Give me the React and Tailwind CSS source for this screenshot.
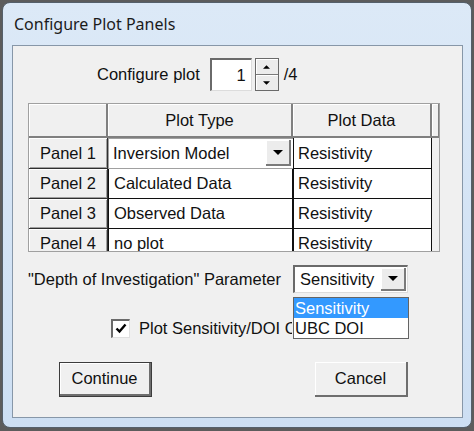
import React from "react";

const sans = { fontFamily: '"Liberation Sans", Arial, sans-serif' };

// small triangle glyph for spinners / combo buttons
const Tri = ({ up = false, size = 9 }) => (
  <svg width={size} height={Math.ceil(size / 2)} viewBox="0 0 10 5">
    <path d={up ? "M0 5 L5 0 L10 5 Z" : "M0 0 L10 0 L5 5 Z"} fill="#000" />
  </svg>
);

const ComboButton = () => (
  <div className="w-[25px] h-full bg-[#ececec] border-r-2 border-b-2 border-[#7a7a7a] shadow-[inset_1px_1px_0_#ffffff] flex items-center justify-center">
    <Tri size={10} />
  </div>
);

const rows = [
  { panel: "Panel 1", type: "Inversion Model", data: "Resistivity", combo: true },
  { panel: "Panel 2", type: "Calculated Data", data: "Resistivity" },
  { panel: "Panel 3", type: "Observed Data", data: "Resistivity" },
  { panel: "Panel 4", type: "no plot", data: "Resistivity" },
];

const PlotGrid = () => (
  <div className="ml-[15px] mt-[12px] w-[412px] h-[149px] border border-[#a0a0a0] bg-[#f0f0f0] overflow-hidden">
    <div className="grid grid-cols-[79px_185px_139px_8px] grid-rows-[34px_31px_30px_30px_30px]">
      <div className="bg-[#f0f0f0] border-r-2 border-b-2 border-[#808080] shadow-[inset_1px_1px_0_#ffffff]" />
      <div className="bg-[#f0f0f0] border-r-2 border-b-2 border-[#808080] shadow-[inset_1px_1px_0_#ffffff] flex items-center justify-center">
        Plot Type
      </div>
      <div className="bg-[#f0f0f0] border-r-2 border-b-2 border-[#808080] shadow-[inset_1px_1px_0_#ffffff] flex items-center justify-center">
        Plot Data
      </div>
      <div className="bg-[#f0f0f0] border-r-2 border-b-2 border-[#808080] shadow-[inset_1px_1px_0_#ffffff]" />

      {rows.map((r) => (
        <React.Fragment key={r.panel}>
          <div className="bg-[#f0f0f0] border-r border-b border-[#303030] shadow-[inset_1px_1px_0_#ffffff,inset_-1px_-1px_0_#a0a0a0] flex items-center justify-center">
            {r.panel}
          </div>
          {r.combo ? (
            <div className="bg-white border-b border-[#a0a0a0] flex items-stretch pl-[5px] py-[2px] pr-[2px] shadow-[inset_1px_1px_0_#a0a0a0]">
              <span className="flex-1 flex items-center">{r.type}</span>
              <ComboButton />
            </div>
          ) : (
            <div className="bg-white border-l border-r border-b border-[#101010] flex items-center pl-[5px]">
              {r.type}
            </div>
          )}
          <div className="bg-white border-l border-r border-b border-[#101010] flex items-center pl-[4px]">
            {r.data}
          </div>
          <div className="bg-[#f0f0f0]" />
        </React.Fragment>
      ))}
    </div>
  </div>
);

const DialogButton = ({ label, isDefault }) => (
  <div
    className={`w-[93px] h-[35px] flex ${
      isDefault ? "border border-[#3c3c3c]" : ""
    }`}
  >
    <div className="flex-1 bg-[#f0f0f0] border-r-2 border-b-2 border-[#6e6e6e] shadow-[inset_1px_1px_0_#ffffff] flex items-center justify-center">
      {label}
    </div>
  </div>
);

export default function App() {
  return (
    <div className="w-[474px] h-[431px] bg-[#5c5c5c] p-[2px] pb-[3px] text-[16.5px] text-[#111]" style={sans}>
      <div className="w-full h-full rounded-[8px] border border-[#55606b] bg-gradient-to-b from-[#dce9f7] to-[#cddff3] flex flex-col px-[8px] pl-[9px] pb-[9px]">
        {/* title bar */}
        <div className="h-[42px] flex items-center pl-[2px]">
          <span className="text-[16px] text-[#1b1b1b]" style={{ fontFamily: '"Noto Sans", "Open Sans", sans-serif' }}>
            Configure Plot Panels
          </span>
        </div>

        {/* client area */}
        <div className="flex-1 relative bg-[#f0f0f0] border border-[#8797a8] flex flex-col">
          <div className="mt-[12px] pl-[84px] flex items-center h-[33px]">
            <span>Configure plot</span>
            <div className="ml-[10px] w-[42px] h-[33px] bg-white border-t-2 border-l-2 border-[#6a6a6a] border-r border-b border-r-[#dcdcdc] border-b-[#dcdcdc] flex items-center justify-end pr-[5px]">
              1
            </div>
            <div className="ml-[3px] w-[24px] h-[33px] flex flex-col border border-[#6a6a6a]">
              <div className="flex-1 bg-[#ececec] border-b border-[#7a7a7a] shadow-[inset_1px_1px_0_#ffffff] flex items-center justify-center">
                <Tri up size={7} />
              </div>
              <div className="flex-1 bg-[#ececec] shadow-[inset_1px_1px_0_#ffffff] flex items-center justify-center">
                <Tri size={7} />
              </div>
            </div>
            <span className="ml-[5px]">/4</span>
          </div>

          <PlotGrid />

          <div className="mt-[13px] ml-[15px] flex items-center h-[28px]">
            <span className="w-[265px] whitespace-nowrap">"Depth of Investigation" Parameter</span>
            <div className="w-[115px] h-[28px] bg-white border-t-2 border-l-2 border-[#6a6a6a] border-r border-b border-r-[#dcdcdc] border-b-[#dcdcdc] flex items-stretch pl-[5px] py-[1px] pr-[1px]">
              <span className="flex-1 flex items-center">Sensitivity</span>
              <ComboButton />
            </div>
          </div>

          <div className="mt-[25px] pl-[98px] flex items-center h-[20px]">
            <div className="w-[19px] h-[19px] bg-white border-t-2 border-l-2 border-[#6a6a6a] border-r border-b border-r-[#e0e0e0] border-b-[#e0e0e0] flex items-center justify-center">
              <svg width="12" height="11" viewBox="0 0 12 11">
                <path d="M1.5 5.5 L4.5 8.5 L10.5 1.5" stroke="#000" strokeWidth="2.4" fill="none" />
              </svg>
            </div>
            {/* the open list covers the rest of this label */}
            <span className="ml-[9px] w-[153px] overflow-hidden whitespace-nowrap">Plot Sensitivity/DOI Cutoff</span>
          </div>

          <div className="mt-[24px] pl-[46px] flex items-center gap-[163px]">
            <DialogButton label="Continue" isDefault />
            <DialogButton label="Cancel" />
          </div>

          {/* open dropdown list */}
          <div className="absolute left-[280px] top-[251px] w-[116px] h-[42px] bg-white border border-[#646464] flex flex-col z-10">
            <div className="h-[20px] bg-[#3399ff] text-white flex items-center pl-[1px]">Sensitivity</div>
            <div className="h-[20px] flex items-center pl-[1px]">UBC DOI</div>
          </div>
        </div>
      </div>
    </div>
  );
}
